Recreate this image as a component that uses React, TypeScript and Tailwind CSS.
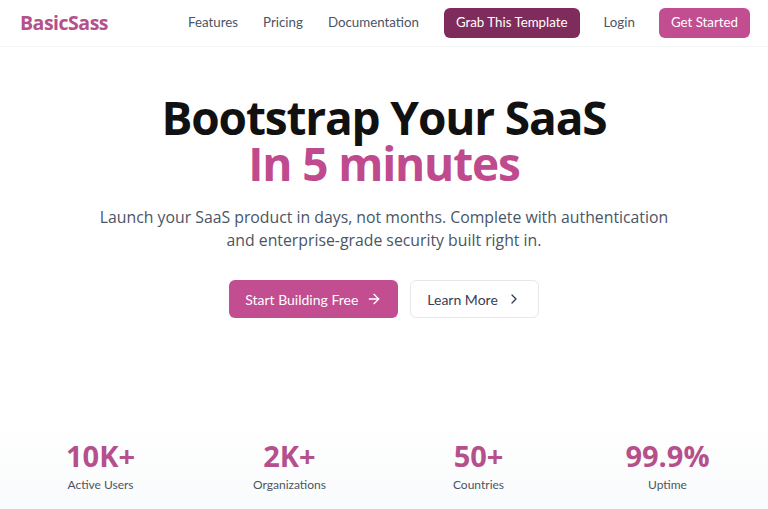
import { ArrowRight, ChevronRight } from "lucide-react";

const stats = [
  { value: "10K+", label: "Active Users" },
  { value: "2K+", label: "Organizations" },
  { value: "50+", label: "Countries" },
  { value: "99.9%", label: "Uptime" },
];

export default function App() {
  return (
    <div className="min-h-screen bg-white font-['Lato',sans-serif] text-gray-900">
      <header className="flex h-[47px] items-center justify-between border-b border-gray-100 pl-5 pr-[18px]">
        <span className="font-['Open_Sans',sans-serif] text-[19.5px] font-bold tracking-tight text-[#b5508c]">BasicSass</span>
        <nav className="flex items-center text-[13.3px] text-gray-600">
          <a className="mr-[25px]">Features</a>
          <a className="mr-[25px]">Pricing</a>
          <a className="mr-[25px]">Documentation</a>
          <button className="mr-6 h-[30px] rounded-md bg-[#7f2c5c] px-3 text-white">Grab This Template</button>
          <a className="mr-6">Login</a>
          <button className="h-[30px] rounded-md bg-[#c24d91] px-3 text-white">Get Started</button>
        </nav>
      </header>

      <section className="flex flex-col items-center pt-[47px] text-center">
        <h1 className="font-['Open_Sans',sans-serif] text-[46px] font-bold leading-[46px] tracking-tight text-[#111]">
          Bootstrap Your SaaS
          <br />
          <span className="text-[#c04a8e]">In 5 minutes</span>
        </h1>
        <p className="mt-[20px] max-w-[580px] font-['Open_Sans',sans-serif] text-[15.8px] leading-[23px] text-gray-600">
          Launch your SaaS product in days, not months. Complete with authentication and enterprise-grade security built right in.
        </p>
        <div className="mt-[28px] flex gap-3">
          <button className="flex h-[38px] items-center gap-2 rounded-md bg-[#c24d91] px-4 text-[14px] text-white">
            Start Building Free <ArrowRight className="h-4 w-4" />
          </button>
          <button className="flex h-[38px] items-center gap-2 rounded-md border border-gray-200 bg-white px-4 text-[14px] text-gray-700">
            Learn More <ChevronRight className="h-4 w-4" />
          </button>
        </div>
      </section>

      <section className="mt-[102px] bg-gradient-to-b from-white to-gray-50 px-[6px] pb-6 pt-[18px]">
        <div className="grid grid-cols-4 text-center">
          {stats.map((s) => (
            <div key={s.label}>
              <div className="font-['Open_Sans',sans-serif] text-[29px] font-bold leading-9 text-[#b5508c]">{s.value}</div>
              <div className="mt-[2px] text-[12px] text-gray-600">{s.label}</div>
            </div>
          ))}
        </div>
      </section>
    </div>
  );
}
